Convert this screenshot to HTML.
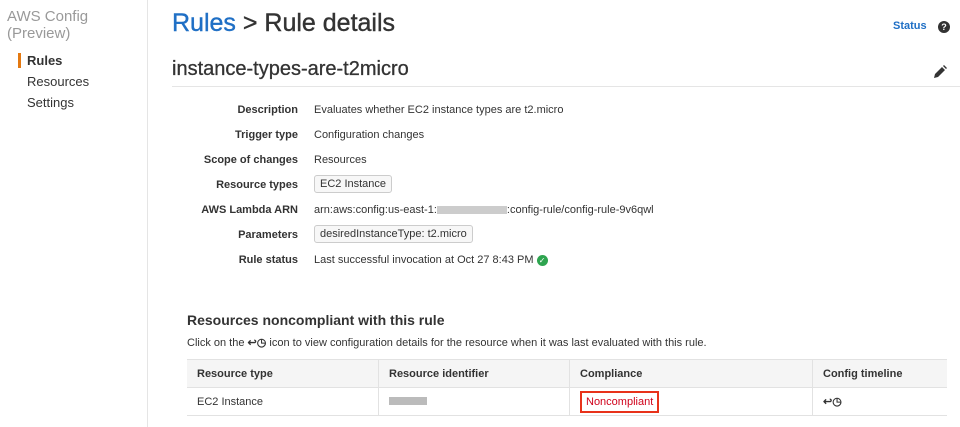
<!DOCTYPE html><html><head><style>
body{margin:0;width:960px;height:427px;background:#fff;font-family:"Liberation Sans",sans-serif;color:#333;position:relative;overflow:hidden}
.a{position:absolute;white-space:nowrap}
.lab{position:absolute;right:662px;font-size:11px;font-weight:bold;color:#333}
.val{position:absolute;left:314px;font-size:11px;color:#333}
.tag{border:1px solid #ccc;border-radius:3px;background:#f7f7f7;padding:2px 5px;position:relative;top:-1px}
td,th{font-size:11px;text-align:left;padding:0 10px;border-left:1px solid #e2e2e2}
td:first-child,th:first-child{border-left:none}
</style></head><body>
<div class="a" style="left:7px;top:8px;font-size:15px;color:#999;line-height:17px">AWS Config<br>(Preview)</div>
<div class="a" style="left:18px;top:53px;width:3px;height:15px;background:#e47911"></div>
<div class="a" style="left:27px;top:53px;font-size:13px;font-weight:bold">Rules</div>
<div class="a" style="left:27px;top:74px;font-size:13px">Resources</div>
<div class="a" style="left:27px;top:95px;font-size:13px">Settings</div>
<div class="a" style="left:147px;top:0;width:1px;height:427px;background:#e5e5e5"></div>
<div class="a" style="left:172px;top:9px;font-size:25px;color:#333;-webkit-text-stroke:0.4px #333"><span style="color:#1f6fc5;-webkit-text-stroke:0.4px #1f6fc5">Rules</span> &gt; Rule details</div>
<div class="a" style="left:893px;top:20px;font-size:11px;font-weight:bold;color:#1f6fc5">Status</div>
<div class="a" style="left:938px;top:21px;width:12px;height:12px;border-radius:50%;background:#333;color:#fff;font-size:9px;font-weight:bold;text-align:center;line-height:12px">?</div>
<div class="a" style="left:172px;top:58px;font-size:20px;color:#333;-webkit-text-stroke:0.3px #333">instance-types-are-t2micro</div>
<svg class="a" style="left:933px;top:65px" width="14" height="14" viewBox="0 0 14 14"><path d="M1 13l1-4 7-7 3 3-7 7z M10 1l3 3 1-1-3-3z" fill="#333"/></svg>
<div class="a" style="left:172px;top:86px;width:788px;height:1px;background:#e5e5e5"></div>
<div class="lab" style="top:104px">Description</div><div class="val" style="top:104px">Evaluates whether EC2 instance types are t2.micro</div>
<div class="lab" style="top:129px">Trigger type</div><div class="val" style="top:129px">Configuration changes</div>
<div class="lab" style="top:154px">Scope of changes</div><div class="val" style="top:154px">Resources</div>
<div class="lab" style="top:179px">Resource types</div><div class="val" style="top:179px"><span class="tag">EC2 Instance</span></div>
<div class="lab" style="top:204px">AWS Lambda ARN</div><div class="val" style="top:204px">arn:aws:config:us-east-1:<span style="display:inline-block;width:70px;height:8px;background:#ccc;vertical-align:middle"></span>:config-rule/config-rule-9v6qwl</div>
<div class="lab" style="top:229px">Parameters</div><div class="val" style="top:229px"><span class="tag">desiredInstanceType: t2.micro</span></div>
<div class="lab" style="top:254px">Rule status</div><div class="val" style="top:254px">Last successful invocation at Oct 27 8:43 PM <span style="display:inline-block;width:11px;height:11px;border-radius:50%;background:#2ea44f;color:#fff;font-size:8px;text-align:center;line-height:11px;vertical-align:middle">✓</span></div>
<div class="a" style="left:187px;top:312px;font-size:14px;font-weight:bold">Resources noncompliant with this rule</div>
<div class="a" style="left:187px;top:336px;font-size:11px">Click on the <b>↩◷</b> icon to view configuration details for the resource when it was last evaluated with this rule.</div>
<table class="a" style="left:187px;top:359px;width:760px;border-collapse:collapse">
<tr style="height:28px;background:#f5f5f5;border-top:1px solid #e2e2e2;border-bottom:1px solid #e2e2e2"><th style="width:171px">Resource type</th><th style="width:170px">Resource identifier</th><th style="width:222px">Compliance</th><th>Config timeline</th></tr>
<tr style="height:28px;border-bottom:1px solid #e2e2e2"><td>EC2 Instance</td><td><span style="display:inline-block;width:38px;height:8px;background:#bbb"></span></td><td><span style="color:#d0021b;border:2px solid #e8321a;padding:3px 4px">Noncompliant</span></td><td style="font-weight:bold">↩◷</td></tr>
</table>
</body></html>
